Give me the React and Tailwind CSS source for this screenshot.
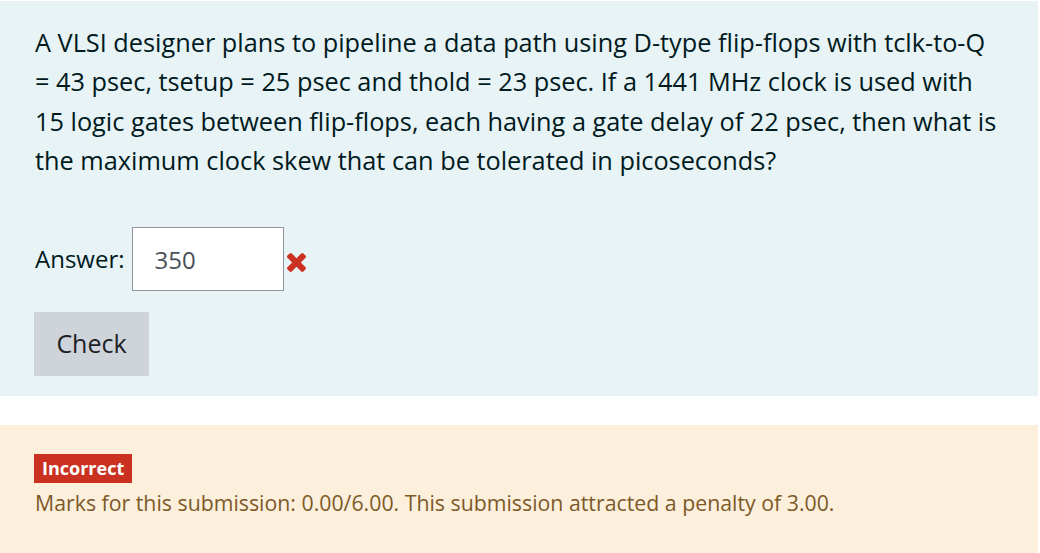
import React from 'react';

const font = { fontFamily: '"Open Sans", "Noto Sans", sans-serif' };

// red cross shown beside a wrong answer
const WrongIcon = () => (
    <svg viewBox="110 250 1188 1296" className="w-[19px] h-[21px] shrink-0" aria-hidden="true">
        <path
            fill="#ca3120"
            d="M1298 1322q0 40-28 68l-136 136q-28 28-68 28t-68-28l-294-294-294 294q-28 28-68 28t-68-28l-136-136q-28-28-28-68t28-68l294-294-294-294q-28-28-28-68t28-68l136-136q28-28 68-28t68 28l294 294 294-294q28-28 68-28t68 28l136 136q28 28 28 68t-28 68l-294 294 294 294q28 28 28 68z"
        />
    </svg>
);

const App = () => {
    return (
        <div className="min-h-screen bg-white pt-px pr-[2px]" style={font}>
            {/* Question */}
            <div className="bg-[#e7f3f5] pl-[35px] pr-[35px] pt-[22px] pb-[20px] text-[#001a1e]">
                <p className="text-[25.3px] leading-[39.3px]">
                    A VLSI designer plans to pipeline a data path using D-type flip-flops with tclk-to-Q = 43 psec, tsetup = 25 psec and thold = 23 psec. If a 1441 MHz clock is used with 15 logic gates between flip-flops, each having a gate delay of 22 psec, then what is the maximum clock skew that can be tolerated in picoseconds?
                </p>

                <div className="mt-[47px] flex items-center text-[24px]">
                    <label className="mr-[7px]">Answer:</label>
                    <input
                        type="text"
                        defaultValue="350"
                        readOnly
                        className="w-[152px] h-[64px] bg-white border border-[#8f959e] pl-[22px] text-[24px] text-[#495057] outline-none"
                        style={font}
                    />
                    <span className="ml-[3px] mt-[4px]"><WrongIcon /></span>
                </div>

                <button
                    type="button"
                    className="mt-[21px] -ml-px w-[115px] h-[64px] bg-[#ced4da] text-[#1d2125] text-[25px]"
                    style={font}
                >
                    Check
                </button>
            </div>

            {/* Outcome */}
            <div className="mt-[29px] bg-[#fcefdc] pl-[34px] pr-[30px] pt-[29px] pb-[40px] text-[#7d5a29]">
                <span className="inline-block bg-[#ca3120] text-white font-bold text-[18px] leading-[29px] px-[8px]">
                    Incorrect
                </span>
                <div className="pl-px text-[21.3px] leading-[40px]">
                    Marks for this submission: 0.00/6.00. This submission attracted a penalty of 3.00.
                </div>
            </div>
        </div>
    );
};

export default App;
